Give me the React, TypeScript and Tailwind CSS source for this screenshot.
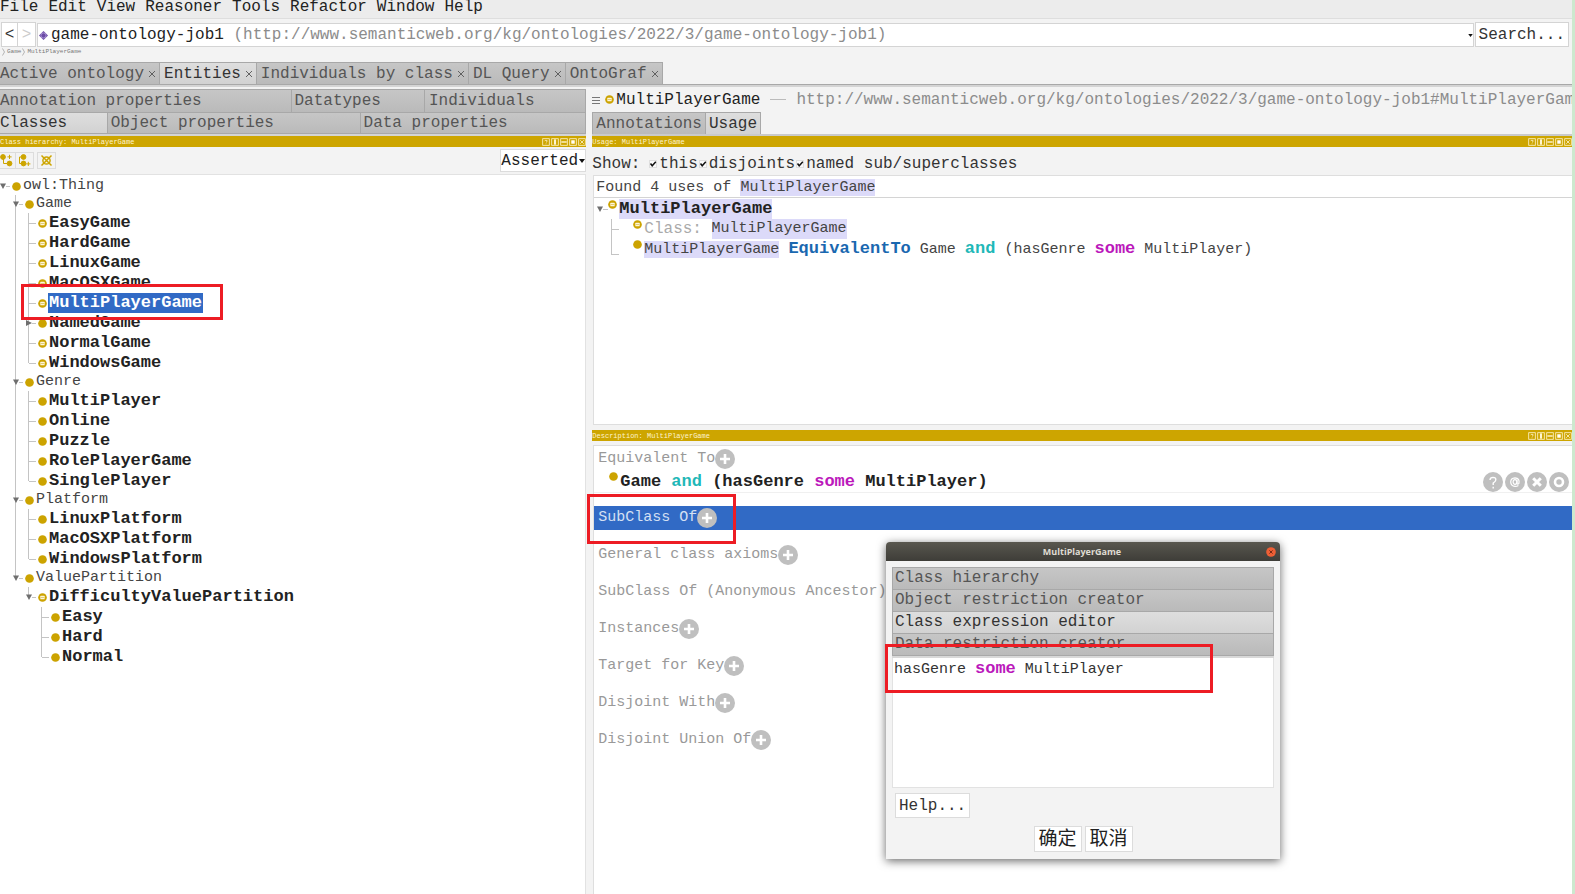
import { useState, type ReactNode } from "react";
import clsx from "clsx";

type Kind = "plain" | "defined";

interface TreeNode {
  name: string;
  kind?: Kind;
  bold?: boolean;
  collapsed?: boolean;
  children?: TreeNode[];
}

const leaf = (name: string, kind: Kind = "plain"): TreeNode => ({ name, kind, bold: true });

const TREE: TreeNode = {
  name: "owl:Thing",
  children: [
    {
      name: "Game",
      children: [
        leaf("EasyGame", "defined"),
        leaf("HardGame", "defined"),
        leaf("LinuxGame", "defined"),
        leaf("MacOSXGame", "defined"),
        leaf("MultiPlayerGame", "defined"),
        { name: "NamedGame", bold: true, collapsed: true },
        leaf("NormalGame", "defined"),
        leaf("WindowsGame", "defined"),
      ],
    },
    {
      name: "Genre",
      children: [
        leaf("MultiPlayer"),
        leaf("Online"),
        leaf("Puzzle"),
        leaf("RolePlayerGame"),
        leaf("SinglePlayer"),
      ],
    },
    {
      name: "Platform",
      children: [leaf("LinuxPlatform"), leaf("MacOSXPlatform"), leaf("WindowsPlatform")],
    },
    {
      name: "ValuePartition",
      children: [
        {
          name: "DifficultyValuePartition",
          kind: "defined",
          bold: true,
          children: [leaf("Easy"), leaf("Hard"), leaf("Normal")],
        },
      ],
    },
  ],
};

const MENUS = ["File", "Edit", "View", "Reasoner", "Tools", "Refactor", "Window", "Help"];
const MAIN_TABS = ["Active ontology", "Entities", "Individuals by class", "DL Query", "OntoGraf"];
const SECTIONS = [
  { title: "General class axioms", add: true },
  { title: "SubClass Of (Anonymous Ancestor)", add: false },
  { title: "Instances", add: true },
  { title: "Target for Key", add: true },
  { title: "Disjoint With", add: true },
  { title: "Disjoint Union Of", add: true },
];
const EDITOR_TABS = [
  "Class hierarchy",
  "Object restriction creator",
  "Class expression editor",
  "Data restriction creator",
];

const TAB = "bg-linear-to-b from-[#c6c6c6] to-[#bababa] text-[#555]";
const TAB_ACTIVE = "bg-linear-to-b from-[#dedede] to-[#d2d2d2] text-[#333]";

function ClassIcon({ kind = "plain", className }: { kind?: Kind; className?: string }) {
  return (
    <svg viewBox="0 0 10 10" className={clsx("size-[9px] shrink-0", className)} aria-hidden="true">
      <circle cx="5" cy="5" r="4.8" fill="#cca300" />
      {kind === "defined" && (
        <>
          <rect x="2.6" y="3" width="4.8" height="4" rx="0.6" fill="#fdf6dc" />
          <rect x="3.2" y="4.6" width="3.6" height="0.8" fill="#d9bb4a" />
        </>
      )}
    </svg>
  );
}

function Triangle({ right }: { right?: boolean }) {
  return (
    <svg viewBox="0 0 6 6" className="size-[6px]" aria-hidden="true">
      <path d={right ? "M0 0L6 3L0 6Z" : "M0 0.5H6L3 6Z"} fill="#6e6e6e" />
    </svg>
  );
}

function Toggle({ node, open, onToggle }: { node: TreeNode; open: boolean; onToggle: () => void }) {
  const expandable = node.collapsed || node.children;
  return (
    <span className="flex w-[12px] shrink-0 items-center">
      {expandable ? (
        <button type="button" onClick={onToggle} aria-label={`Toggle ${node.name}`} className="shrink-0">
          <Triangle right={!open} />
        </button>
      ) : (
        <span className="w-[3px]" />
      )}
      <span className="mr-[2px] h-px flex-1 bg-[#c4c4c4]" />
    </span>
  );
}

function Branch({
  node,
  root,
  selected,
  onSelect,
}: {
  node: TreeNode;
  root?: boolean;
  selected: string;
  onSelect: (name: string) => void;
}) {
  const [open, setOpen] = useState(!node.collapsed);
  const active = node.name === selected;
  return (
    <li
      className={clsx(
        !root &&
          "bg-[linear-gradient(#c4c4c4,#c4c4c4)] bg-[size:1px_100%] bg-[position:2px_0] bg-no-repeat last:bg-[size:1px_10px]"
      )}
    >
      <div className={clsx("flex items-center", node.bold ? "h-[20px]" : "h-[18px]")}>
        <Toggle node={node} open={open} onToggle={() => setOpen(!open)} />
        <ClassIcon kind={node.kind} />
        <button
          type="button"
          onClick={() => onSelect(node.name)}
          className={clsx(
            "ml-px px-px whitespace-nowrap",
            node.bold ? "text-[17px] leading-[20px] font-bold" : "text-[15px] leading-[18px]",
            active ? "bg-[#316ac5] text-white" : node.bold ? "text-[#222]" : "text-[#444]"
          )}
        >
          {node.name}
        </button>
      </div>
      {open && node.children && (
        <ul className="ml-[13px]">
          {node.children.map((child) => (
            <Branch key={child.name} node={child} selected={selected} onSelect={onSelect} />
          ))}
        </ul>
      )}
    </li>
  );
}

function ViewBar({ title }: { title: string }) {
  const glyphs = [
    <path key="help" d="M3 3.2Q4.5 1.8 5.8 3Q6 4.2 4.5 5M4.5 6.2V7" />,
    <path key="cols" d="M4.5 1.5V7.5" strokeWidth="2.4" />,
    <path key="rows" d="M1.5 4.5H7.5" strokeWidth="1.6" />,
    <rect key="float" x="3" y="3" width="3" height="3" fill="white" />,
    <path key="close" d="M2.5 2.5L6.5 6.5M6.5 2.5L2.5 6.5" />,
  ];
  const names = ["Help", "Split vertically", "Split horizontally", "Float", "Close"];
  return (
    <div className="flex h-[11px] shrink-0 items-center justify-between bg-[#cda500] text-[7px] leading-[10px] text-[#fdf3cf]">
      <span>{title}</span>
      <span className="flex gap-px">
        {glyphs.map((g, i) => (
          <button key={names[i]} type="button" aria-label={names[i]}>
            <svg viewBox="0 0 9 9" className="size-[8px]" fill="none" stroke="#fff6d0" strokeWidth="0.9">
              <rect x="0.8" y="0.8" width="7.4" height="7.4" />
              {g}
            </svg>
          </button>
        ))}
      </span>
    </div>
  );
}

function RoundButton({ label, children }: { label: string; children: ReactNode }) {
  return (
    <button type="button" aria-label={label} className="shrink-0">
      <svg viewBox="0 0 20 20" className="size-[20px]" fill="none" stroke="white" strokeWidth="2.6">
        <circle cx="10" cy="10" r="10" fill="#bfbfbf" stroke="none" />
        {children}
      </svg>
    </button>
  );
}

function AddButton({ label }: { label: string }) {
  return (
    <RoundButton label={`Add ${label}`}>
      <path d="M10 5V15M5 10H15" />
    </RoundButton>
  );
}

function CheckOption({ label }: { label: string }) {
  return (
    <label className="flex items-center gap-[2px]">
      <span className="grid">
        <input
          type="checkbox"
          defaultChecked
          className="peer col-start-1 row-start-1 size-[8px] appearance-none border border-[#dedede] bg-[#fafafa]"
        />
        <svg
          viewBox="0 0 8 8"
          className="pointer-events-none invisible col-start-1 row-start-1 size-[8px] peer-checked:visible"
          fill="none"
          stroke="#111"
          strokeWidth="1.5"
        >
          <path d="M1.5 3.5L3.2 5.8L6.8 1.8" />
        </svg>
      </span>
      {label}
    </label>
  );
}

function Mark({ children }: { children: ReactNode }) {
  return <span className="bg-[#dcdaf9]">{children}</span>;
}

function Keyword({ children, tone }: { children: ReactNode; tone: "teal" | "magenta" | "blue" }) {
  return (
    <b
      className={clsx(
        "text-[17px]",
        tone === "teal" && "text-[#1fb8b8]",
        tone === "magenta" && "text-[#bb18bb]",
        tone === "blue" && "text-[#1a68b0]"
      )}
    >
      {children}
    </b>
  );
}

function ClassesPane() {
  const [selected, setSelected] = useState("MultiPlayerGame");
  return (
    <section className="flex w-[37.3%] shrink-0 flex-col">
      <div className="mt-[2px] border-t border-r border-[#a8a8a8]">
        <div className="flex h-[22px] leading-[22px]">
          <button type="button" className={clsx(TAB, "w-[49.8%] border-r border-[#a8a8a8] text-left")}>
            Annotation properties
          </button>
          <button type="button" className={clsx(TAB, "w-[22.8%] border-r border-[#a8a8a8] pl-[3px] text-left")}>
            Datatypes
          </button>
          <button type="button" className={clsx(TAB, "flex-1 pl-[4px] text-left")}>
            Individuals
          </button>
        </div>
        <div className="flex h-[22px] border-y border-[#a8a8a8] leading-[20px]">
          <button type="button" className={clsx(TAB_ACTIVE, "w-[18.4%] border-r border-[#a8a8a8] text-left")}>
            Classes
          </button>
          <button type="button" className={clsx(TAB, "w-[43.2%] border-r border-[#a8a8a8] pl-[3px] text-left")}>
            Object properties
          </button>
          <button type="button" className={clsx(TAB, "flex-1 pl-[3px] text-left")}>
            Data properties
          </button>
        </div>
      </div>
      <div className="h-[2px] bg-[#d4d4d4]" />
      <ViewBar title="Class hierarchy: MultiPlayerGame" />
      <div className="flex h-[27px] items-center justify-between">
        <div className="flex">
          <button type="button" aria-label="Add subclass" className="border border-l-0 border-[#dcdcdc] py-px pr-[2px]">
            <svg viewBox="0 0 13 13" className="size-[13px]" fill="#cda500" stroke="#cda500">
              <circle cx="3" cy="3" r="2.4" />
              <circle cx="9.5" cy="9.5" r="2.4" />
              <path d="M3.5 5V9.5H7M9.5 0.8V5M7.4 2.9H11.6" fill="none" />
            </svg>
          </button>
          <button type="button" aria-label="Add sibling class" className="border border-l-0 border-[#dcdcdc] px-[2px] py-px">
            <svg viewBox="0 0 13 13" className="size-[13px]" fill="#cda500" stroke="#cda500">
              <circle cx="5.5" cy="3" r="2.4" />
              <circle cx="5.5" cy="9.5" r="2.4" />
              <path d="M4 3H1.5V9.5H4M10.3 7.8V12M8.2 9.9H12.4" fill="none" />
            </svg>
          </button>
          <button type="button" aria-label="Delete class" className="ml-[3px] border border-[#dcdcdc] px-[2px] py-px">
            <svg viewBox="0 0 13 13" className="size-[13px]" fill="none" stroke="#cda500" strokeWidth="1.5">
              <circle cx="6.5" cy="6.5" r="3.6" />
              <path d="M1.5 1.5L11.5 11.5M11.5 1.5L1.5 11.5" />
            </svg>
          </button>
        </div>
        <span className="flex h-[23px] items-center border border-[#dcdcdc] bg-white">
          <select aria-label="Hierarchy mode" className="w-[78px] appearance-none text-[16px] text-[#222]">
            <option>Asserted</option>
            <option>Inferred</option>
          </select>
          <svg viewBox="0 0 6 4" className="h-[4px] w-[6px]" aria-hidden="true">
            <path d="M0 0H6L3 4Z" fill="#111" />
          </svg>
        </span>
      </div>
      <div className="flex-1 border-t border-r border-[#e2e2e2] bg-white pt-[2px]">
        <ul>
          <Branch node={TREE} root selected={selected} onSelect={setSelected} />
        </ul>
      </div>
    </section>
  );
}

function UsageView() {
  return (
    <>
      <ViewBar title="Usage: MultiPlayerGame" />
      <div className="flex h-[28px] shrink-0 items-center gap-px pt-[6px] text-[#333]">
        <span className="mr-[8px]">Show:</span>
        <CheckOption label="this" />
        <CheckOption label="disjoints" />
        <CheckOption label="named sub/superclasses" />
      </div>
      <div className="ml-px h-[250px] shrink-0 border-t border-b border-l border-[#dedede] bg-white text-[15px] text-[#444]">
        <p className="mb-px h-[22px] border-b border-[#d4d4d4] pt-[3px] pl-[2px] leading-[18px]">
          Found 4 uses of <Mark>MultiPlayerGame</Mark>
        </p>
        <div className="flex h-[20px] items-center pl-[3px] leading-[20px]">
          <Triangle />
          <span className="h-px w-[5px] bg-[#c4c4c4]" />
          <ClassIcon kind="defined" className="mb-[10px]" />
          <b className="ml-[2px] bg-[#dcdaf9] text-[17px] text-[#222]">MultiPlayerGame</b>
        </div>
        <ul className="ml-[17px] leading-[20px]">
          <li className="flex h-[20px] items-center bg-[linear-gradient(#c4c4c4,#c4c4c4)] bg-[size:1px_20px] bg-no-repeat">
            <span className="mr-[14px] h-px w-[8px] bg-[#c4c4c4]" />
            <ClassIcon kind="defined" className="mb-[10px]" />
            <span className="ml-[2px] text-[16px] whitespace-pre text-[#aaa]">Class: </span>
            <Mark>MultiPlayerGame</Mark>
          </li>
          <li className="flex h-[20px] items-center bg-[linear-gradient(#c4c4c4,#c4c4c4)] bg-[size:1px_15px] bg-no-repeat">
            <span className="mt-[10px] mr-[14px] h-px w-[8px] bg-[#c4c4c4]" />
            <ClassIcon className="mb-[10px]" />
            <span className="ml-[2px] whitespace-nowrap">
              <Mark>MultiPlayerGame</Mark> <Keyword tone="blue">EquivalentTo</Keyword> Game{" "}
              <Keyword tone="teal">and</Keyword> (hasGenre <Keyword tone="magenta">some</Keyword> MultiPlayer)
            </span>
          </li>
        </ul>
      </div>
    </>
  );
}

function DescriptionView() {
  return (
    <>
      <ViewBar title="Description: MultiPlayerGame" />
      <div className="mt-[4px] ml-px flex flex-1 flex-col border-t border-l border-[#dedede] bg-white text-[15px] text-[#999]">
        <div className="flex h-[25px] shrink-0 items-center pl-[4px]">
          Equivalent To
          <AddButton label="Equivalent To" />
        </div>
        <div className="flex h-[22px] shrink-0 items-center justify-between border-b border-[#f0f0f0] pr-[3px] pl-[15px]">
          <div className="flex items-center">
            <ClassIcon className="mb-[10px]" />
            <p className="ml-[2px] text-[17px] font-bold whitespace-nowrap text-[#222]">
              Game <Keyword tone="teal">and</Keyword> (hasGenre <Keyword tone="magenta">some</Keyword>{" "}
              MultiPlayer)
            </p>
          </div>
          <div className="flex gap-[2px]">
            <RoundButton label="Explain">
              <path d="M7 8Q7.2 5.4 10 5.4Q13 5.5 12.8 8Q12.6 9.4 10.2 11V13M10.2 14.8V16.4" strokeWidth="1.4" />
            </RoundButton>
            <RoundButton label="Annotate">
              <path
                d="M12 7.8V11.4Q12.6 13 13.9 11.4Q15 6.2 10 5.8Q5.8 6 5.7 10Q5.9 14.2 10 14.4Q12 14.4 13.4 13.4"
                strokeWidth="1.2"
              />
              <ellipse cx="10" cy="10" rx="1.9" ry="2.3" strokeWidth="1.2" />
            </RoundButton>
            <RoundButton label="Remove">
              <path d="M6.2 6.2L13.8 13.8M13.8 6.2L6.2 13.8" strokeWidth="3" />
            </RoundButton>
            <RoundButton label="Edit">
              <circle cx="10" cy="10" r="4" />
            </RoundButton>
          </div>
        </div>
        <div className="mt-[13px] flex h-[24px] shrink-0 items-center bg-[#316ac5] pl-[4px] text-[#d4e0f3]">
          SubClass Of
          <AddButton label="SubClass Of" />
        </div>
        {SECTIONS.map((s) => (
          <div key={s.title} className="mt-[13px] flex h-[24px] shrink-0 items-center pl-[4px]">
            {s.title}
            {s.add && <AddButton label={s.title} />}
          </div>
        ))}
      </div>
    </>
  );
}

function ExpressionDialog() {
  const [tab, setTab] = useState("Class expression editor");
  return (
    <div
      role="dialog"
      aria-label="MultiPlayerGame"
      className="absolute top-[542px] left-[886px] w-[394px] rounded-t-[4px] bg-[#f3f3f3] pb-[7px] shadow-[0_2px_10px_rgba(0,0,0,0.6)]"
    >
      <div className="flex h-[19px] items-center rounded-t-[4px] bg-linear-to-b from-[#59574f] to-[#3e3d38] pr-[4px] pl-[12px]">
        <span className="flex-1 text-center font-['Open_Sans',sans-serif] text-[9px] font-bold text-[#dfdbd2]">
          MultiPlayerGame
        </span>
        <button type="button" aria-label="Close">
          <svg viewBox="0 0 10 10" className="size-[10px]">
            <circle cx="5" cy="5" r="4.8" fill="#ee5f35" />
            <path d="M3.4 3.4L6.6 6.6M6.6 3.4L3.4 6.6" stroke="#6b2412" strokeWidth="0.9" />
          </svg>
        </button>
      </div>
      <div className="px-[6px] pt-[6px]">
        <div className="border-t border-r border-l border-[#a8a8a8]">
          {EDITOR_TABS.map((t) => (
            <button
              key={t}
              type="button"
              onClick={() => setTab(t)}
              className={clsx(
                "block h-[22px] w-full border-b border-[#a8a8a8] pl-[2px] text-left leading-[21px]",
                t === tab ? TAB_ACTIVE : TAB
              )}
            >
              {t}
            </button>
          ))}
        </div>
        <div className="h-[2px] bg-[#d8d8d8]" />
        <div
          role="textbox"
          aria-label="Class expression"
          contentEditable
          suppressContentEditableWarning
          className="h-[130px] border border-t-0 border-[#e2e2e2] bg-white pt-px pl-px text-[15px] leading-[20px] text-[#333] outline-none"
        >
          hasGenre <Keyword tone="magenta">some</Keyword> MultiPlayer
        </div>
        <button
          type="button"
          className="mt-[5px] ml-[3px] block h-[25px] border border-[#dcdcdc] bg-white px-[3px] text-[#333]"
        >
          Help...
        </button>
        <div className="mt-[8px] flex justify-center gap-[3px] text-[19px] text-[#222]">
          <button type="button" className="h-[26px] w-[48px] border border-[#dcdcdc] bg-white pt-[2px] leading-[22px]">
            确定
          </button>
          <button type="button" className="h-[26px] w-[48px] border border-[#dcdcdc] bg-white pt-[2px] leading-[22px]">
            取消
          </button>
        </div>
      </div>
    </div>
  );
}

export default function App() {
  const [mainTab, setMainTab] = useState("Entities");
  return (
    <div className="relative flex h-screen overflow-hidden bg-[#cde8ce] font-['Liberation_Mono','Noto_Sans_CJK_SC',monospace] text-[16px] leading-[20px]">
      <div className="mr-[3px] flex min-w-0 flex-1 flex-col bg-[#f3f3f3]">
        <nav className="flex h-[19px] shrink-0 gap-[10px] border-b border-[#dedede] bg-[#ececec] text-[#222]">
          {MENUS.map((m) => (
            <button key={m} type="button" className="h-[14px] leading-[14px]">
              {m}
            </button>
          ))}
        </nav>

        <div className="flex h-[28px] shrink-0 items-end pr-[3px] pl-px">
          <button type="button" className="h-[25px] w-[17px] border border-[#d4d4d4] bg-white text-[#333]">
            &lt;
          </button>
          <button type="button" className="h-[25px] w-[18px] border border-l-0 border-[#d4d4d4] bg-white text-[#ccc]">
            &gt;
          </button>
          <button
            type="button"
            role="combobox"
            aria-expanded="false"
            aria-label="Active ontology"
            className="ml-px flex h-[24px] min-w-0 flex-1 items-center border border-[#d4d4d4] bg-white pl-px whitespace-pre text-[#222]"
          >
            <svg viewBox="0 0 10 10" className="mr-[3px] size-[9px] shrink-0" aria-hidden="true">
              <path d="M5 0L10 5L5 10L0 5Z" fill="#6a4aa5" />
              <circle cx="5" cy="5" r="2.8" fill="none" stroke="#c9b8e8" strokeWidth="0.7" />
            </svg>
            game-ontology-job1{" "}
            <span className="flex-1 text-left text-[#8c8c8c]">
              (http://www.semanticweb.org/kg/ontologies/2022/3/game-ontology-job1)
            </span>
            <svg viewBox="0 0 6 4" className="h-[3px] w-[5px]" aria-hidden="true">
              <path d="M0 0H6L3 4Z" fill="#111" />
            </svg>
          </button>
          <button type="button" className="ml-px h-[25px] border border-[#d4d4d4] bg-white px-[3px] text-[#333]">
            Search...
          </button>
        </div>

        <div className="flex h-[15px] shrink-0 items-start gap-px pt-px pl-[2px] text-[6px] leading-[8px] text-[#777]">
          {["Game", "MultiPlayerGame"].map((c) => (
            <span key={c} className="flex items-center gap-[2px]">
              <svg viewBox="0 0 3 8" className="h-[8px] w-[3px]" fill="none" stroke="#999" strokeWidth="0.7">
                <path d="M0.5 0.5L2.5 4L0.5 7.5" />
              </svg>
              {c}
            </span>
          ))}
        </div>

        <div className="flex h-[22px] shrink-0">
          {MAIN_TABS.map((t, i) => (
            <div
              key={t}
              className={clsx(
                "flex items-center border-t border-r border-[#a8a8a8] pt-px pr-[3px]",
                i === 0 ? "gap-[4px] pl-0" : "gap-[4px] pl-[4px]",
                t === mainTab ? TAB_ACTIVE : TAB
              )}
            >
              <button type="button" onClick={() => setMainTab(t)}>
                {t}
              </button>
              <button type="button" aria-label={`Close ${t}`}>
                <svg viewBox="0 0 8 8" className="size-[8px]" stroke="#555" strokeWidth="0.9">
                  <path d="M1 1L7 7M7 1L1 7" />
                </svg>
              </button>
            </div>
          ))}
        </div>
        <div className="h-[3px] shrink-0 border-t border-[#a8a8a8] bg-[#d4d4d4]" />

        <main className="flex min-h-0 flex-1 gap-[6px]">
          <ClassesPane />
          <section className="flex min-w-0 flex-1 flex-col">
            <header className="flex h-[25px] shrink-0 items-center overflow-hidden whitespace-nowrap text-[#8c8c8c]">
              <svg viewBox="0 0 8 8" className="mr-[5px] size-[8px] shrink-0" stroke="#777" strokeWidth="1">
                <path d="M0 1.5H8M0 4.5H8M0 7.5H8" />
              </svg>
              <ClassIcon kind="defined" className="mr-[2px]" />
              <h1 className="text-[#222]">MultiPlayerGame</h1>
              <span className="mx-[10px] h-px w-[16px] shrink-0 bg-[#bbb]" />
              http://www.semanticweb.org/kg/ontologies/2022/3/game-ontology-job1#MultiPlayerGame
            </header>
            <div className="flex h-[22px] shrink-0">
              <button type="button" className={clsx(TAB, "border border-b-0 border-[#a8a8a8] px-[3px]")}>
                Annotations
              </button>
              <button
                type="button"
                className={clsx(TAB_ACTIVE, "border border-b-0 border-l-0 border-[#a8a8a8] px-[3px]")}
              >
                Usage
              </button>
            </div>
            <div className="h-[2px] shrink-0 bg-[#cacaca]" />
            <UsageView />
            <div className="h-[5px] shrink-0" />
            <DescriptionView />
          </section>
        </main>
      </div>

      <ExpressionDialog />

      {/* callouts drawn over the window */}
      <div className="pointer-events-none absolute top-[284px] left-[21px] h-[36px] w-[202px] border-3 border-[#ed1c24]" />
      <div className="pointer-events-none absolute top-[494px] left-[587px] h-[50px] w-[149px] border-3 border-[#ed1c24]" />
      <div className="pointer-events-none absolute top-[644px] left-[885px] h-[49px] w-[328px] border-3 border-[#ed1c24]" />
    </div>
  );
}
